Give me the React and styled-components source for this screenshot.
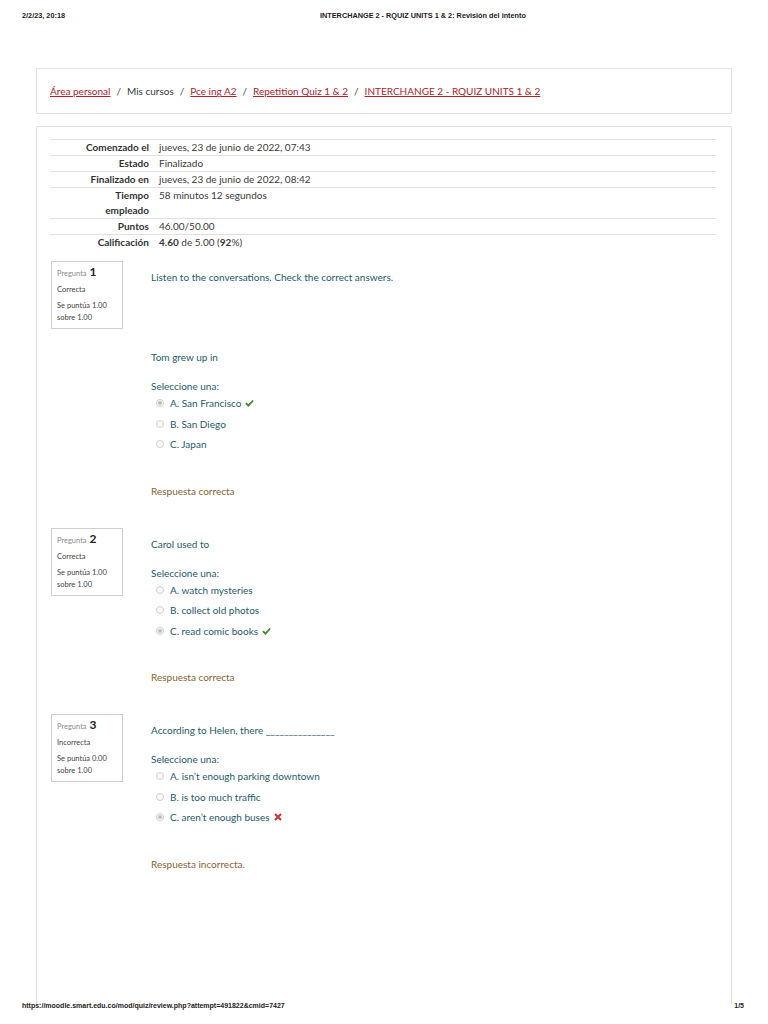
import React from "react";
import styled, { createGlobalStyle } from "styled-components";

const Global = createGlobalStyle`
  html, body { margin: 0; padding: 0; background: #fff; }
  body { font-family: Lato, "Open Sans", sans-serif; color: #333; }
  * { box-sizing: border-box; }
`;

const Page = styled.div`
  width: 768px;
  height: 1024px;
  display: flex;
  flex-direction: column;
  overflow: hidden;
`;

const PrintBar = styled.div`
  height: 30px;
  padding: 0 22px;
  display: grid;
  grid-template-columns: 298px auto 1fr;
  align-items: center;
  font-family: "Liberation Sans Narrow", "Liberation Sans", sans-serif;
  font-size: 7.3px;
  font-weight: bold;
  color: #222;
`;

const Body = styled.div`
  flex: 1;
  padding: 38px 36px 0 36px;
  display: flex;
  flex-direction: column;
  gap: 12px;
  min-height: 0;
`;

const Card = styled.div`
  border: 1px solid #e2e2e2;
  background: #fff;
`;

const CrumbCard = styled(Card)`
  height: 46px;
  display: flex;
  align-items: center;
  padding: 0 13px;
  font-size: 10px;
  color: #373737;
`;

const Crumb = styled.a`
  color: #b0222a;
  text-decoration: underline;
`;

const Sep = styled.span`
  margin: 0 6px;
  color: #444;
`;

const MainCard = styled(Card)`
  flex: 1;
  border-bottom: none;
  padding: 12px 15px 0 13px;
  min-height: 0;
`;

const Summary = styled.div`
  display: grid;
  grid-template-columns: 103px 1fr;
  font-size: 10px;
  line-height: 15px;
`;

const Label = styled.div`
  text-align: right;
  font-weight: bold;
  padding-right: 4px;
  color: #333;
  border-top: 1px solid #e0e0e0;
`;

const Value = styled.div`
  padding-left: 6px;
  color: #3a3a3a;
  border-top: 1px solid #e0e0e0;
`;

const Question = styled.div`
  display: flex;
  margin-top: ${(p) => p.$mt}px;
  padding-left: 1px;
`;

const InfoBox = styled.div`
  width: 72px;
  height: 68px;
  flex: none;
  border: 1px solid #cfcfcf;
  padding: 4px 5px;
  font-size: 7.5px;
  color: #444;
  line-height: 11px;
`;

const QNo = styled.div`
  color: #8a8a8a;
  span {
    font-size: 12px;
    font-weight: bold;
    color: #222;
    margin-left: 1px;
  }
`;

const State = styled.div`
  margin-top: 5px;
`;

const Grade = styled.div`
  margin-top: 5px;
  line-height: 12px;
`;

const Content = styled.div`
  margin-left: 28px;
  padding-top: 9px;
  font-size: 10px;
  line-height: 14px;
  color: #245b69;
`;

const QText = styled.div`
  margin-bottom: ${(p) => p.$mb || 0}px;
`;

const Prompt = styled.div`
  margin-top: 15px;
`;

const Options = styled.div`
  padding-left: 5px;
`;

const Option = styled.div`
  height: 20.5px;
  display: flex;
  align-items: center;
  gap: 6px;
`;

const Radio = styled.span`
  width: 8px;
  height: 8px;
  border-radius: 50%;
  border: 1px solid #cfcfcf;
  background: #fafafa;
  display: inline-flex;
  align-items: center;
  justify-content: center;
  &::after {
    content: "";
    width: 4px;
    height: 4px;
    border-radius: 50%;
    background: ${(p) => (p.$checked ? "#bdbdbd" : "transparent")};
  }
`;

const Feedback = styled.div`
  margin-top: 29px;
  color: #8a6330;
`;

const Footer = styled.div`
  height: 22px;
  flex: none;
  padding: 0 24px 0 22px;
  display: flex;
  justify-content: space-between;
  align-items: flex-start;
  font-family: "Liberation Sans Narrow", "Liberation Sans", sans-serif;
  font-size: 7px;
  font-weight: bold;
  color: #222;
  margin-top: -2px;
`;

const Check = () => (
  <svg width="9" height="8" viewBox="0 0 10 8" style={{ marginLeft: -2 }}>
    <path d="M1 4.2 L3.8 7 L9 1.2" fill="none" stroke="#3b8a2c" strokeWidth="2" />
  </svg>
);

const Cross = () => (
  <svg width="8" height="8" viewBox="0 0 8 8" style={{ marginLeft: -2 }}>
    <path d="M1 1 L7 7 M7 1 L1 7" fill="none" stroke="#d0312d" strokeWidth="2" />
  </svg>
);

const summary = [
  ["Comenzado el", "jueves, 23 de junio de 2022, 07:43"],
  ["Estado", "Finalizado"],
  ["Finalizado en", "jueves, 23 de junio de 2022, 08:42"],
  [<>Tiempo<br />empleado</>, "58 minutos 12 segundos"],
  ["Puntos", "46.00/50.00"],
  ["Calificación", <><b>4.60</b> de 5.00 (<b>92</b>%)</>],
];

const questions = [
  {
    n: 1,
    state: "Correcta",
    grade: "1.00",
    intro: "Listen to the conversations. Check the correct answers.",
    text: "Tom grew up in",
    opts: ["A. San Francisco", "B. San Diego", "C. Japan"],
    sel: 0,
    mark: "ok",
    fb: "Respuesta correcta",
    mt: 11,
  },
  {
    n: 2,
    state: "Correcta",
    grade: "1.00",
    text: "Carol used to",
    opts: ["A. watch mysteries", "B. collect old photos", "C. read comic books"],
    sel: 2,
    mark: "ok",
    fb: "Respuesta correcta",
    mt: 30,
  },
  {
    n: 3,
    state: "Incorrecta",
    grade: "0.00",
    text: "According to Helen, there _______________",
    opts: ["A. isn’t enough parking downtown", "B. is too much traffic", "C. aren’t enough buses"],
    sel: 2,
    mark: "bad",
    fb: "Respuesta incorrecta.",
    mt: 30,
  },
];

export default function App() {
  return (
    <Page>
      <Global />
      <PrintBar>
        <span>2/2/23, 20:18</span>
        <span>INTERCHANGE 2 - RQUIZ UNITS 1 &amp; 2: Revisión del intento</span>
        <span />
      </PrintBar>
      <Body>
        <CrumbCard>
          <Crumb>Área personal</Crumb>
          <Sep>/</Sep>
          <span>Mis cursos</span>
          <Sep>/</Sep>
          <Crumb>Pce ing A2</Crumb>
          <Sep>/</Sep>
          <Crumb>Repetition Quiz 1 &amp; 2</Crumb>
          <Sep>/</Sep>
          <Crumb>INTERCHANGE 2 - RQUIZ UNITS 1 &amp; 2</Crumb>
        </CrumbCard>
        <MainCard>
          <Summary>
            {summary.map(([l, v], i) => (
              <React.Fragment key={i}>
                <Label>{l}</Label>
                <Value>{v}</Value>
              </React.Fragment>
            ))}
          </Summary>
          {questions.map((q) => (
            <Question key={q.n} $mt={q.mt}>
              <InfoBox>
                <QNo>
                  Pregunta <span>{q.n}</span>
                </QNo>
                <State>{q.state}</State>
                <Grade>
                  Se puntúa {q.grade}
                  <br />
                  sobre 1.00
                </Grade>
              </InfoBox>
              <Content>
                {q.intro && <QText $mb={66}>{q.intro}</QText>}
                <QText>{q.text}</QText>
                <Prompt>Seleccione una:</Prompt>
                <Options>
                  {q.opts.map((o, i) => (
                    <Option key={o}>
                      <Radio $checked={i === q.sel} />
                      <span>{o}</span>
                      {i === q.sel && (q.mark === "ok" ? <Check /> : <Cross />)}
                    </Option>
                  ))}
                </Options>
                <Feedback>{q.fb}</Feedback>
              </Content>
            </Question>
          ))}
        </MainCard>
      </Body>
      <Footer>
        <span>https://moodle.smart.edu.co/mod/quiz/review.php?attempt=491822&amp;cmid=7427</span>
        <span>1/5</span>
      </Footer>
    </Page>
  );
}
